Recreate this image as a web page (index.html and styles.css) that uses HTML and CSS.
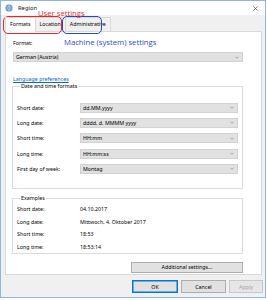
FILE: index.html
```html
<!DOCTYPE html>
<html lang="en">
<head>
  <meta charset="UTF-8">
  <title>Region</title>
  <link rel="stylesheet" href="styles.css">
</head>
<body>

<div class="window">
  <div class="titlebar">
    <svg class="app-icon" viewBox="0 0 16 16">
      <circle cx="8" cy="8" r="7" fill="#4a82bf"/>
      <path d="M2 6h12M2 10h12M8 1c-3 3-3 11 0 14M8 1c3 3 3 11 0 14" stroke="#d4e6f7" stroke-width="1.2" fill="none"/>
    </svg>
    <span class="title">Region</span>
    <svg class="close" viewBox="0 0 6 6">
      <path d="M0.5 0.5L5.5 5.5M5.5 0.5L0.5 5.5" stroke="#444" stroke-width="0.8"/>
    </svg>
  </div>

  <div class="dialog-body">
    <div class="tabs">
      <div class="tab active">Formats</div>
      <div class="tab">Location</div>
      <div class="tab">Administrative</div>
    </div>

    <div class="page">
      <div class="label">Format:</div>
      <div class="combo wide">
        <span>German (Austria)</span>
        <svg class="chev" viewBox="0 0 5 3"><path d="M0.5 0.5L2.5 2.5L4.5 0.5" stroke="#777" stroke-width="0.7" fill="none"/></svg>
      </div>

      <a class="link" href="#">Language preferences</a>

      <fieldset class="group formats">
        <legend>Date and time formats</legend>
        <div class="row">
          <span>Short date:</span>
          <div class="combo"><span>dd.MM.yyyy</span><svg class="chev" viewBox="0 0 5 3"><path d="M0.5 0.5L2.5 2.5L4.5 0.5" stroke="#777" stroke-width="0.7" fill="none"/></svg></div>
        </div>
        <div class="row">
          <span>Long date:</span>
          <div class="combo"><span>dddd, d. MMMM yyyy</span><svg class="chev" viewBox="0 0 5 3"><path d="M0.5 0.5L2.5 2.5L4.5 0.5" stroke="#777" stroke-width="0.7" fill="none"/></svg></div>
        </div>
        <div class="row">
          <span>Short time:</span>
          <div class="combo"><span>HH:mm</span><svg class="chev" viewBox="0 0 5 3"><path d="M0.5 0.5L2.5 2.5L4.5 0.5" stroke="#777" stroke-width="0.7" fill="none"/></svg></div>
        </div>
        <div class="row">
          <span>Long time:</span>
          <div class="combo"><span>HH:mm:ss</span><svg class="chev" viewBox="0 0 5 3"><path d="M0.5 0.5L2.5 2.5L4.5 0.5" stroke="#777" stroke-width="0.7" fill="none"/></svg></div>
        </div>
        <div class="row">
          <span>First day of week:</span>
          <div class="combo"><span>Montag</span><svg class="chev" viewBox="0 0 5 3"><path d="M0.5 0.5L2.5 2.5L4.5 0.5" stroke="#777" stroke-width="0.7" fill="none"/></svg></div>
        </div>
      </fieldset>

      <fieldset class="group examples">
        <legend>Examples</legend>
        <div class="ex-row"><span>Short date:</span><span>04.10.2017</span></div>
        <div class="ex-row"><span>Long date:</span><span>Mittwoch, 4. Oktober 2017</span></div>
        <div class="ex-row"><span>Short time:</span><span>18:53</span></div>
        <div class="ex-row"><span>Long time:</span><span>18:53:14</span></div>
      </fieldset>

      <div class="page-actions">
        <button class="btn additional">Additional settings...</button>
      </div>
    </div>

    <div class="actions">
      <button class="btn ok">OK</button>
      <button class="btn cancel">Cancel</button>
      <button class="btn apply" disabled>Apply</button>
    </div>
  </div>

  <!-- annotations drawn over the dialog -->
  <div class="note-box user-box"></div>
  <div class="note-box machine-box"></div>
  <div class="note user-note">User settings</div>
  <div class="note machine-note">Machine (system) settings</div>
</div>

</body>
</html>
```

FILE: styles.css
```css
body { margin: 0; background: #fff; font-family: "Noto Sans", "Liberation Sans", sans-serif; font-size: 5.3px; color: #000; }

.window { position: relative; width: 266px; height: 298px; box-sizing: border-box; border: 1px solid #8fb7de; background: #f0f0f0; }

.titlebar { height: 14px; background: #fff; display: flex; align-items: center; padding: 0 4px; }
.app-icon { width: 8px; height: 8px; }
.title { margin-left: 5px; font-size: 5.8px; color: #111; }
.close { width: 5px; height: 5px; margin-left: auto; margin-right: 3px; }

.dialog-body { padding: 2px 2px 0 4px; }

.tabs { display: flex; height: 14px; }
.tab { padding: 0 4px; line-height: 13px; border: 1px solid #d9d9d9; border-bottom: none; margin-right: -1px; background: #f0f0f0; }
.tab.active { background: #fff; height: 14px; position: relative; z-index: 1; }

.page { width: 257px; height: 244px; box-sizing: border-box; border: 1px solid #d9d9d9; background: #fff; padding: 7px 18px 0 7px; display: flex; flex-direction: column; }

.label { line-height: 8px; }

.combo { height: 10px; box-sizing: border-box; border: 1px solid #d2d2d2; background: #e1e1e1; display: flex; align-items: center; justify-content: space-between; padding: 0 3px 0 2px; color: #000; }
.combo.wide { margin-top: 5px; width: 230px; }
.chev { width: 4px; height: 3px; }

.link { margin-top: 14px; line-height: 7px; color: #0a66c2; text-decoration: underline; align-self: flex-start; }

.group { margin: 0 0 0 -1px; width: 231px; box-sizing: border-box; border: 1px solid #dcdcdc; padding: 10px 4px 12px 4px; min-width: 0; }
.group legend { padding: 0 1px; margin-left: 3px; line-height: 7px; }

.row { height: 15.3px; display: grid; grid-template-columns: 63px 1fr; align-items: center; }
.row .combo { height: 10px; }

.examples { margin-top: 5.5px; padding: 1px 4px 0 4px; }
.ex-row { height: 12.5px; display: grid; grid-template-columns: 63px 1fr; align-items: center; }

.page-actions { display: flex; justify-content: flex-end; margin-top: 8px; }

.btn { font-family: inherit; font-size: 5.3px; color: #000; background: #e1e1e1; border: 1px solid #adadad; padding: 0; margin: 0; box-sizing: border-box; }
.additional { width: 112px; height: 11px; }

.actions { display: flex; justify-content: flex-end; gap: 3px; margin-top: 5px; }
.actions .btn { height: 13px; }
.ok { width: 46px; border: 1px solid #0078d7; box-shadow: inset 0 0 0 0.5px #0078d7; }
.cancel { width: 45px; }
.apply { width: 34px; color: #a3a3a3; border-color: #c8c8c8; background: #e6e6e6; }

.note-box { position: absolute; top: 15px; height: 18px; box-sizing: border-box; border-radius: 5px; border: 1.5px solid; }
.user-box { left: 2px; width: 59px; border-color: #e3272d; }
.machine-box { left: 61px; width: 40px; border-color: #2a46c6; }

.note { position: absolute; font-family: "Open Sans", "Noto Sans", sans-serif; font-size: 7.7px; line-height: 9px; white-space: nowrap; }
.user-note { left: 37px; top: 7.5px; color: #e2312c; }
.machine-note { left: 63px; top: 37px; color: #2e4cd0; }
```
